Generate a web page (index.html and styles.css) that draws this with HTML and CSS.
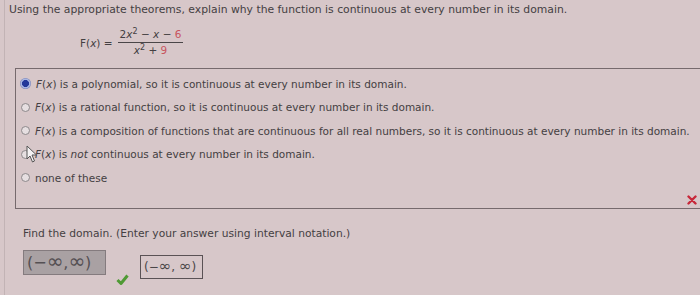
FILE: index.html
```html
<!DOCTYPE html>
<html>
<head>
<meta charset="utf-8">
<link rel="stylesheet" href="styles.css">
</head>
<body>
<div class="page">
  <p class="title">Using the appropriate theorems, explain why the function is continuous at every number in its domain.</p>
  <div class="formula">
    <span class="lhs">F(<i>x</i>) =</span>
    <span class="frac">
      <span class="num">2<i>x</i><sup>2</sup> − <i>x</i> − <span class="red">6</span></span>
      <span class="den"><i>x</i><sup>2</sup> + <span class="red">9</span></span>
    </span>
  </div>
  <div class="box">
    <ul class="choices">
      <li><span class="radio checked"></span><span><i>F</i>(<i>x</i>) is a polynomial, so it is continuous at every number in its domain.</span></li>
      <li><span class="radio"></span><span><i>F</i>(<i>x</i>) is a rational function, so it is continuous at every number in its domain.</span></li>
      <li><span class="radio"></span><span><i>F</i>(<i>x</i>) is a composition of functions that are continuous for all real numbers, so it is continuous at every number in its domain.</span></li>
      <li class="cursor-row"><span class="radio"></span><span><i>F</i>(<i>x</i>) is <i>not</i> continuous at every number in its domain.</span>
        <svg class="cursor" width="12" height="18" viewBox="0 0 12 18"><path d="M1 1 L1 14 L4 11 L6.5 17 L8.5 16 L6 10 L10.5 10 Z" fill="#f4f2f3" stroke="#555" stroke-width="1"/></svg>
      </li>
      <li><span class="radio"></span><span>none of these</span></li>
    </ul>
    <div class="mark">
      <svg width="10" height="10" viewBox="0 0 10 10"><path d="M1.5 1.5 L8.5 8.5 M8.5 1.5 L1.5 8.5" stroke="#c8283a" stroke-width="2.4" stroke-linecap="round"/></svg>
    </div>
  </div>
  <p class="prompt">Find the domain. (Enter your answer using interval notation.)</p>
  <div class="answers">
    <span class="ans-filled">(−<span class="inf">∞</span>,<span class="inf">∞</span>)</span>
    <svg class="check" width="13" height="11" viewBox="0 0 13 11"><path d="M1.5 6 L5 9.5 L11.5 1.5" fill="none" stroke="#4f9a34" stroke-width="3" stroke-linejoin="round"/></svg>
    <span class="ans-correct">(−<span class="inf">∞</span>, <span class="inf">∞</span>)</span>
  </div>
</div>
</body>
</html>
```
FILE: styles.css
```css
html, body {
  margin: 0;
  padding: 0;
}
body {
  background: #d7c7c9;
  font-family: "DejaVu Sans", Verdana, sans-serif;
  color: #444042;
  width: 700px;
  height: 295px;
  overflow: hidden;
}
.page {
  padding-left: 8px;
  border-left: 1px solid #c2b3b5;
  margin-left: 4px;
  height: 295px;
  box-sizing: border-box;
}
.title {
  margin: 0;
  padding-top: 3px;
  margin-left: -4px;
  font-size: 10.8px;
  line-height: 14px;
  white-space: nowrap;
}
.formula {
  display: flex;
  align-items: center;
  gap: 5px;
  margin-left: 67px;
  margin-top: 11px;
  font-size: 10.5px;
}
.lhs i, .frac i { font-style: italic; }
.frac {
  display: inline-flex;
  flex-direction: column;
  align-items: center;
}
.num {
  padding: 0 2px 1px;
  border-bottom: 1px solid #4a4648;
  line-height: 13px;
}
.den {
  line-height: 13px;
  padding-top: 1px;
}
.frac sup {
  font-size: 8px;
  line-height: 0;
}
.red { color: #c8555e; }
.box {
  margin-top: 11px;
  margin-left: 2px;
  margin-right: -20px;
  border: 1px solid #766a6d;
  border-right: none;
  height: 141px;
  box-sizing: border-box;
  position: relative;
  display: flex;
  flex-direction: column;
}
.choices {
  list-style: none;
  margin: 0;
  padding: 3px 0 0 5px;
  font-size: 10.5px;
}
.choices li {
  display: flex;
  align-items: center;
  gap: 5px;
  height: 23.5px;
  white-space: nowrap;
  position: relative;
}
.radio {
  width: 9px;
  height: 9px;
  border: 1px solid #8d898b;
  border-radius: 50%;
  background: #e6dfe1;
  flex: none;
  box-sizing: border-box;
}
.radio.checked {
  width: 11px;
  height: 11px;
  border: none;
  background: radial-gradient(circle, #24399a 0 3.2px, #a9b6e2 3.8px 4.6px, #7e8bc0 5.2px);
  margin-left: -1px;
}
.cursor {
  position: absolute;
  left: 5px;
  top: 2px;
}
.mark {
  margin-top: auto;
  margin-right: 23px;
  margin-bottom: 9px;
  text-align: right;
}
.prompt {
  margin: 18px 0 0 10px;
  font-size: 10.7px;
  line-height: 14px;
}
.answers {
  display: flex;
  align-items: flex-start;
  margin: 9px 0 0 10px;
}
.inf {
  font-size: 1.25em;
}
.ans-filled {
  width: 83px;
  height: 25px;
  box-sizing: border-box;
  background: #a9a1a3;
  border: 1px solid #847b7e;
  font-size: 16px;
  line-height: 21px;
  padding-left: 3px;
  color: #555053;
  white-space: nowrap;
}
.check {
  margin: 24px 0 0 10px;
}
.ans-correct {
  margin: 5px 0 0 11px;
  height: 24px;
  width: 63px;
  box-sizing: border-box;
  border: 1px solid #5a5255;
  font-size: 12px;
  line-height: 20px;
  padding-left: 3px;
  color: #4a4648;
  white-space: nowrap;
}
```
